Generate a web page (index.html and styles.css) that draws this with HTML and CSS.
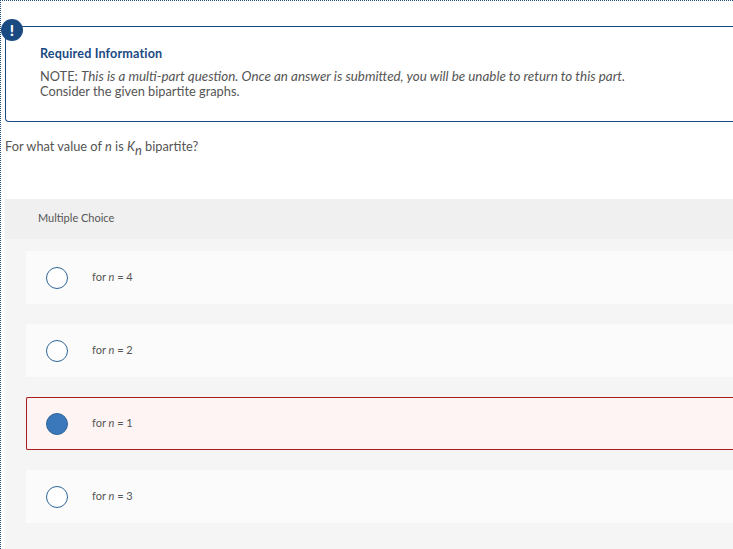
FILE: index.html
```html
<!DOCTYPE html>
<html lang="en">
<head>
    <meta charset="UTF-8">
    <meta name="viewport" content="width=device-width, initial-scale=1.0">
    <title>Multiple Choice</title>
    <link rel="stylesheet" href="styles.css">
</head>
<body>
    <div class="page">
        <div class="notice">
            <div class="notice-badge">!</div>
            <h2>Required Information</h2>
            <p>NOTE: <em>This is a multi-part question. Once an answer is submitted, you will be unable to return to this part.</em><br>Consider the given bipartite graphs.</p>
        </div>

        <p class="question">For what value of <em>n</em> is <em>K<sub>n</sub></em> bipartite?</p>

        <div class="choices">
            <div class="choices-title">Multiple Choice</div>
            <div class="choice">
                <span class="radio"></span>
                <span class="choice-text">for <em>n</em> = 4</span>
            </div>
            <div class="choice">
                <span class="radio"></span>
                <span class="choice-text">for <em>n</em> = 2</span>
            </div>
            <div class="choice selected">
                <span class="radio"></span>
                <span class="choice-text">for <em>n</em> = 1</span>
            </div>
            <div class="choice">
                <span class="radio"></span>
                <span class="choice-text">for <em>n</em> = 3</span>
            </div>
        </div>
    </div>
</body>
</html>
```
FILE: styles.css
```css
html, body {
    height: 100%;
    margin: 0;
    overflow: hidden;
}

body {
    font-family: Lato, "Open Sans", sans-serif;
    color: #555;
    background-color: #fff;
}

.page {
    height: 100%;
    box-sizing: border-box;
    border-top: 1px dotted #1f4e85;
    border-left: 1px dotted #1f4e85;
    padding: 25px 0 0 4px;
}

.notice {
    position: relative;
    height: 96px;
    box-sizing: border-box;
    border: 1px solid #1a4a82;
    border-right: none;
    border-radius: 0 0 0 4px;
    padding: 19px 0 0 34px;
}

.notice-badge {
    position: absolute;
    top: -8px;
    left: -5px;
    width: 22px;
    height: 22px;
    border-radius: 50%;
    background-color: #1a4a82;
    color: #fff;
    font-size: 15px;
    font-weight: 900;
    line-height: 22px;
    text-align: center;
}

.notice h2 {
    margin: 0 0 7px;
    font-size: 12.6px;
    font-weight: 700;
    letter-spacing: 0.15px;
    line-height: 16px;
    color: #1a4a82;
}

.notice p {
    margin: 0;
    font-size: 12.8px;
    line-height: 15px;
}

.notice em {
    font-size: 13.4px;
}

.question {
    margin: 15px 0 0;
    height: 62px;
    font-size: 12.8px;
    line-height: 18px;
}

.question sub {
    font-size: 13px;
    line-height: 0;
}

.choices {
    background-color: #f5f5f5;
    height: 350px;
}

.choices-title {
    height: 40px;
    padding-left: 33px;
    background-color: #f0f0f0;
    font-size: 11px;
    line-height: 38px;
    margin-bottom: 12px;
}

.choice {
    display: flex;
    align-items: center;
    gap: 24px;
    height: 53px;
    box-sizing: border-box;
    margin: 0 0 20px 21px;
    padding-left: 20px;
    background-color: #fbfbfb;
    font-size: 11px;
}

.choice-text {
    margin-bottom: 2px;
}

.choice.selected {
    border: 1px solid #a81c1c;
    border-right: none;
    border-radius: 2px 0 0 2px;
    padding-left: 19px;
    background-color: #fdf4f3;
}

.radio {
    width: 22px;
    height: 22px;
    box-sizing: border-box;
    border: 1px solid #2f6599;
    border-radius: 50%;
    background-color: #fff;
}

.selected .radio {
    background-color: #3b78bb;
}
```
